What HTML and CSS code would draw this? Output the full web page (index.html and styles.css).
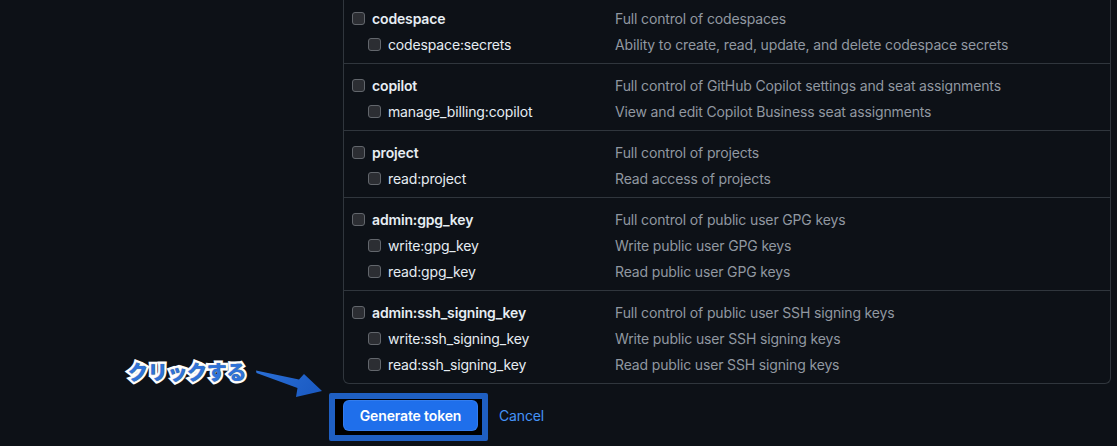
FILE: index.html
```html
<!DOCTYPE html>
<html lang="ja">
<head>
<meta charset="utf-8">
<title>Scopes</title>
<link rel="stylesheet" href="styles.css">
</head>
<body>
<div class="page">
  <div class="panel">
    <ul class="group group-first">
      <li class="row"><label class="name parent"><input type="checkbox" class="cb"><span>codespace</span></label><span class="desc">Full control of codespaces</span></li>
      <li class="row"><label class="name child"><input type="checkbox" class="cb"><span>codespace:secrets</span></label><span class="desc">Ability to create, read, update, and delete codespace secrets</span></li>
    </ul>
    <ul class="group">
      <li class="row"><label class="name parent"><input type="checkbox" class="cb"><span>copilot</span></label><span class="desc">Full control of GitHub Copilot settings and seat assignments</span></li>
      <li class="row"><label class="name child"><input type="checkbox" class="cb"><span>manage_billing:copilot</span></label><span class="desc">View and edit Copilot Business seat assignments</span></li>
    </ul>
    <ul class="group">
      <li class="row"><label class="name parent"><input type="checkbox" class="cb"><span>project</span></label><span class="desc">Full control of projects</span></li>
      <li class="row"><label class="name child"><input type="checkbox" class="cb"><span>read:project</span></label><span class="desc">Read access of projects</span></li>
    </ul>
    <ul class="group">
      <li class="row"><label class="name parent"><input type="checkbox" class="cb"><span>admin:gpg_key</span></label><span class="desc">Full control of public user GPG keys</span></li>
      <li class="row"><label class="name child"><input type="checkbox" class="cb"><span>write:gpg_key</span></label><span class="desc">Write public user GPG keys</span></li>
      <li class="row"><label class="name child"><input type="checkbox" class="cb"><span>read:gpg_key</span></label><span class="desc">Read public user GPG keys</span></li>
    </ul>
    <ul class="group">
      <li class="row"><label class="name parent"><input type="checkbox" class="cb"><span>admin:ssh_signing_key</span></label><span class="desc">Full control of public user SSH signing keys</span></li>
      <li class="row"><label class="name child"><input type="checkbox" class="cb"><span>write:ssh_signing_key</span></label><span class="desc">Write public user SSH signing keys</span></li>
      <li class="row"><label class="name child"><input type="checkbox" class="cb"><span>read:ssh_signing_key</span></label><span class="desc">Read public user SSH signing keys</span></li>
    </ul>
  </div>
  <div class="actions">
    <div class="highlight"></div>
    <button class="btn-primary" type="button">Generate token</button>
    <a class="cancel" href="#">Cancel</a>
  </div>
  <div class="callout">クリックする</div>
  <svg class="arrow" width="80" height="40" viewBox="250 365 80 40" aria-hidden="true">
    <defs>
      <linearGradient id="ag" x1="0" y1="0" x2="1" y2="0.3">
        <stop offset="0" stop-color="#2a6fd6"/>
        <stop offset="1" stop-color="#1c5cc4"/>
      </linearGradient>
    </defs>
    <polygon points="256,374.5 299,383.5 304,378 322,395 296,401 297.5,392 256.5,377" fill="url(#ag)"/>
  </svg>
</div>
</body>
</html>
```

FILE: styles.css
```css
html, body {
  margin: 0;
  padding: 0;
  background: #0d1117;
  height: 446px;
  overflow: hidden;
}

.page {
  position: relative;
  padding-left: 343px;
  font-family: Inter, "Liberation Sans", Arial, sans-serif;
  font-size: 14px;
  letter-spacing: -0.15px;
  color: #e6edf3;
}

.panel {
  box-sizing: border-box;
  width: 768px;
  margin-top: -4px;
  border: 1px solid #30363d;
  border-top: none;
  border-radius: 0 0 6px 6px;
}

.group {
  list-style: none;
  margin: 0;
  padding: 8px 0 6px 8px;
  border-top: 1px solid #30363d;
}

.group-first {
  border-top: none;
  padding-top: 9px;
}

.row {
  display: grid;
  grid-template-columns: 263px 1fr;
  align-items: center;
  height: 26px;
}

.name {
  display: flex;
  align-items: center;
  gap: 7px;
  white-space: nowrap;
}

.parent {
  font-weight: 600;
}

.child {
  padding-left: 16px;
}

.cb {
  appearance: none;
  -webkit-appearance: none;
  box-sizing: border-box;
  width: 13px;
  height: 13px;
  margin: 0;
  border: 1px solid #62666c;
  border-radius: 3px;
  background: #2c2e33;
  flex: none;
}

.desc {
  color: #9198a1;
  white-space: nowrap;
}

.actions {
  position: relative;
  display: flex;
  align-items: center;
  gap: 21px;
  margin-top: 16px;
}

.highlight {
  position: absolute;
  left: -14px;
  top: -7px;
  width: 159px;
  height: 48px;
  box-sizing: border-box;
  border: 6px solid #1f5fc2;
  border-radius: 2px;
  background: #000;
}

.btn-primary {
  position: relative;
  z-index: 1;
  box-sizing: border-box;
  width: 135px;
  height: 31px;
  padding: 0;
  font-family: Inter, "Liberation Sans", Arial, sans-serif;
  font-size: 14px;
  letter-spacing: -0.15px;
  font-weight: 600;
  color: #ffffff;
  background: #1f6feb;
  border: 1px solid rgba(240, 246, 252, 0.1);
  border-radius: 6px;
}

.cancel {
  color: #4493f8;
  text-decoration: none;
  font-size: 14px;
}

.callout {
  position: absolute;
  left: 128px;
  top: 364px;
  font-family: "Noto Sans CJK JP", sans-serif;
  font-weight: 900;
  font-size: 20px;
  line-height: 24px;
  letter-spacing: -0.3px;
  color: #2e72d8;
  -webkit-text-stroke: 5px #ffffff;
  paint-order: stroke fill;
  text-shadow: 0 0 1px rgba(0, 0, 0, 0.6);
}

.arrow {
  position: absolute;
  left: 250px;
  top: 365px;
}
```
